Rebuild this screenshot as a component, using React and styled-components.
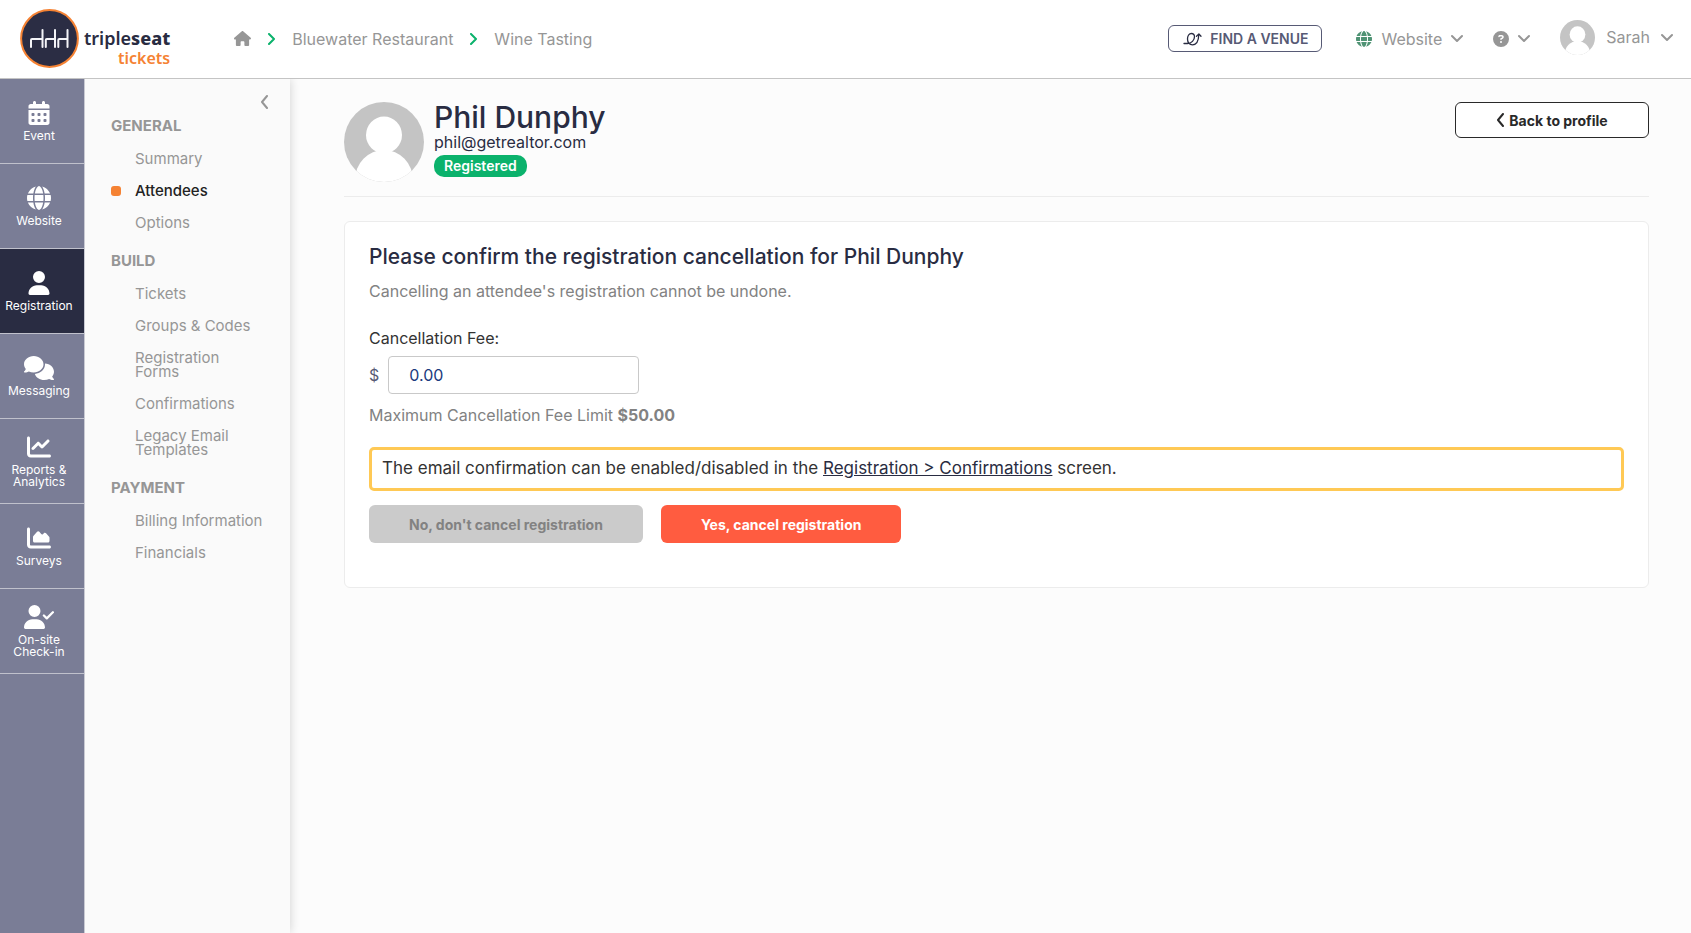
import React, { useState } from "react";
import styled, { createGlobalStyle, css } from "styled-components";
import {
  FaCalendarDays,
  FaGlobe,
  FaUser,
  FaComments,
  FaChartLine,
  FaChartArea,
  FaHouse,
  FaCircleQuestion,
} from "react-icons/fa6";

const GlobalStyle = createGlobalStyle`
  *,
  *::before,
  *::after {
    box-sizing: border-box;
  }

  body {
    margin: 0;
    background: #fcfcfc;
    color: #292c42;
    font-family: Inter, "Open Sans", sans-serif;
    font-size: 16px;
  }

  a {
    color: inherit;
    text-decoration: none;
  }

  button,
  input {
    font-family: inherit;
  }
`;

const Page = styled.div`
  min-height: 100vh;
  display: flex;
  flex-direction: column;
`;

const Header = styled.header`
  display: flex;
  align-items: center;
  height: 79px;
  padding: 0 18px 1px 20px;
  background: #fff;
  border-bottom: 1px solid #c4c4c4;
`;

const Logo = styled.a`
  display: flex;
  align-items: center;
  margin-right: 64px;
`;

const Wordmark = styled.span`
  display: flex;
  flex-direction: column;
  align-items: flex-end;
  margin-left: 5px;
  padding-top: 18px;
  font-family: "Noto Sans", sans-serif;
  font-size: 18px;
  font-weight: 600;
  line-height: 20px;

  b {
    font-weight: 800;
  }
`;

const Tickets = styled.span`
  color: #f58233;
  font-size: 16px;
`;

const Breadcrumbs = styled.nav`
  flex: 1;
  display: flex;
  align-items: center;
  gap: 16px;
  color: #969696;

  a {
    display: flex;
  }
`;

const Tools = styled.div`
  display: flex;
  align-items: center;
  color: #969696;
`;

const VenueButton = styled.button`
  display: flex;
  align-items: center;
  gap: 8px;
  height: 27px;
  margin-right: 34px;
  padding: 0 13px 0 14px;
  border: 1px solid #575a75;
  border-radius: 6px;
  background: #fff;
  color: #575a75;
  font-size: 14px;
  font-weight: 600;
`;

const ToolButton = styled.button`
  display: flex;
  align-items: center;
  gap: 9px;
  margin-right: ${(props) => props.$space || 0}px;
  padding: 0;
  border: 0;
  background: none;
  color: #969696;
  font-size: 16px;
`;

const UserButton = styled(ToolButton)`
  gap: 11px;
  padding-bottom: 3px;
`;

const Body = styled.div`
  flex: 1;
  display: flex;
`;

const Rail = styled.nav`
  flex: none;
  width: 85px;
  background: #7a7d96;
  border-right: 1px solid #c9cad3;
`;

const RailLink = styled.a`
  display: flex;
  flex-direction: column;
  align-items: center;
  justify-content: center;
  gap: 5px;
  height: 85px;
  padding-right: 6px;
  border-bottom: 1px solid #c0c1cc;
  background: ${(props) => (props.$active ? "#292c42" : "transparent")};
  color: #fff;
  font-size: 12px;
  line-height: 12px;
  text-align: center;

  svg {
    flex: none;
    height: 24px;
  }
`;

const SideNav = styled.nav`
  position: relative;
  z-index: 1;
  flex: none;
  width: 205px;
  padding: 39px 25px 40px 26px;
  background: #fafafa;
  box-shadow: 0 0 10px rgba(0, 0, 0, 0.18);
  clip-path: inset(0 -12px 0 0);
`;

const Collapse = styled.button`
  position: absolute;
  top: 16px;
  right: 21px;
  display: flex;
  padding: 0;
  border: 0;
  background: none;
  color: #969696;
`;

const GroupTitle = styled.h2`
  margin: 0 0 18px;
  color: #969696;
  font-size: 15px;
  font-weight: 700;
  line-height: 16px;
`;

const LinkList = styled.ul`
  display: flex;
  flex-direction: column;
  gap: 18px;
  margin: 0 0 23px;
  padding: 0;
  list-style: none;
`;

const SideLink = styled.a`
  display: flex;
  align-items: center;
  color: #969696;
  font-size: 15px;
  line-height: 14px;

  &::before {
    content: "";
    flex: none;
    width: 10px;
    height: 10px;
    margin-right: 14px;
    border-radius: 3px;
  }

  ${(props) =>
    props.$active &&
    css`
      color: #222;
      font-weight: 500;

      &::before {
        background: #f58233;
      }
    `}
`;

const Main = styled.main`
  flex: 1;
  min-width: 0;
  padding: 23px 42px 40px 54px;
`;

const Profile = styled.section`
  display: flex;
  align-items: flex-start;
  gap: 10px;
  padding-bottom: 14px;
  border-bottom: 1px solid #ececec;
`;

const ProfileText = styled.div`
  flex: 1;
`;

const Name = styled.h1`
  margin: 0;
  font-size: 30px;
  font-weight: 500;
  line-height: 30px;
`;

const Email = styled.p`
  margin: 0;
  font-size: 16px;
  line-height: 20px;
`;

const Badge = styled.span`
  display: inline-block;
  margin-top: 3px;
  padding: 0 10px;
  border-radius: 10px;
  background: #0bb26c;
  color: #fff;
  font-size: 14px;
  font-weight: 600;
  line-height: 22px;
`;

const BackButton = styled.button`
  display: flex;
  align-items: center;
  justify-content: center;
  gap: 5px;
  width: 194px;
  height: 36px;
  border: 1px solid #292929;
  border-radius: 6px;
  background: #fff;
  color: #292929;
  font-size: 14px;
  font-weight: 700;
`;

const Card = styled.form`
  margin-top: 24px;
  padding: 23px 24px 44px;
  border: 1px solid #ececec;
  border-radius: 6px;
  background: #fff;
`;

const CardTitle = styled.h2`
  margin: 0 0 12px;
  font-size: 21px;
  font-weight: 500;
  line-height: 24px;
`;

const Muted = styled.p`
  margin: 0;
  color: #828282;
  font-size: 16px;
  line-height: 20px;
`;

const Label = styled.label`
  display: block;
  margin: 27px 0 8px;
  color: #333;
  font-size: 16px;
  line-height: 20px;
`;

const MoneyField = styled.div`
  display: flex;
  align-items: center;
  gap: 9px;
  margin-bottom: 11px;
  color: #575a75;
`;

const MoneyInput = styled.input`
  width: 251px;
  height: 38px;
  padding: 0 20px;
  border: 1px solid #c9c9c9;
  border-radius: 4px;
  background: #fff;
  color: #1b3a7d;
  font-size: 16px;
`;

const Notice = styled.p`
  margin: 22px 0 14px;
  padding: 8px 10px 10px;
  border: 3px solid #ffc955;
  border-radius: 5px;
  color: #333;
  font-size: 17px;
  line-height: 20px;

  a {
    color: #292c42;
    text-decoration: underline;
  }
`;

const Actions = styled.div`
  display: flex;
  gap: 18px;
`;

const ActionButton = styled.button`
  height: 38px;
  padding: 0 40px;
  border: 0;
  border-radius: 6px;
  background: ${(props) => (props.$danger ? "#ff5c40" : "#cbcbcb")};
  color: ${(props) => (props.$danger ? "#fff" : "#828282")};
  font-size: 14px;
  font-weight: 700;
`;

const chevrons = {
  left: "M7 1 L2 7 L7 13",
  right: "M2 1 L7 6 L2 11",
  down: "M1 2 L6 7 L11 2",
};

const Chevron = ({ dir, width, height, color = "currentColor", weight = 2 }) => (
  <svg
    width={width}
    height={height}
    viewBox={`0 0 ${width} ${height}`}
    fill="none"
    aria-hidden="true"
  >
    <path
      d={chevrons[dir]}
      stroke={color}
      strokeWidth={weight}
      strokeLinecap="round"
      strokeLinejoin="round"
    />
  </svg>
);

const DownChevron = () => <Chevron dir="down" width={12} height={9} />;

const CrumbChevron = () => <Chevron dir="right" width={9} height={12} color="#0bb26c" />;

const Avatar = ({ size }) => (
  <svg width={size} height={size} viewBox="0 0 80 80" aria-hidden="true">
    <clipPath id={`avatar-${size}`}>
      <circle cx="40" cy="40" r="40" />
    </clipPath>
    <g clipPath={`url(#avatar-${size})`}>
      <rect width="80" height="80" fill="#c4c4c4" />
      <ellipse cx="40" cy="33" rx="18" ry="18.500" fill="#fff" />
      <ellipse cx="40" cy="78" rx="29" ry="30" fill="#fff" />
    </g>
  </svg>
);

const LogoMark = () => (
  <svg width="59" height="59" viewBox="0 0 59 59" aria-hidden="true">
    <circle cx="29.5" cy="29.5" r="28.4" fill="#2b2d44" stroke="#f58233" strokeWidth="2" />
    <g fill="none" stroke="#f4f4f8" strokeWidth="2" strokeLinecap="round">
      <path d="M11 38 V31 Q11 30 12 30 H22.500 M22.500 21 V38" />
      <path d="M25.800 38 V31 Q25.800 30 26.800 30 H35 M35 21 V38" />
      <path d="M38.300 38 V31 Q38.300 30 39.300 30 H47.500 M47.500 21 V38" />
    </g>
  </svg>
);

const VenueIcon = () => (
  <svg width="19" height="14" viewBox="0 0 19 14" fill="none" aria-hidden="true">
    <path
      d="M1 11.500 H4.500 C8.500 11.500 11.500 8 11.500 4.800 C11.500 2.600 10.200 1.500 8.500 1.500 C6 1.500 4.500 4 4.500 7 C4.500 10.500 6.500 12.800 9.500 12.800 C13.500 12.800 15.600 8.500 15.800 2.500 M13.500 4.300 L15.900 1.900 L18 4.300"
      stroke="#292c42"
      strokeWidth="1.300"
      strokeLinecap="round"
      strokeLinejoin="round"
    />
  </svg>
);

const UserCheckIcon = () => (
  <svg width="30" height="24" viewBox="0 0 640 512" fill="#fff" aria-hidden="true">
    <path d="M96 128a128 128 0 1 1 256 0A128 128 0 1 1 96 128zM0 482.300C0 383.800 79.800 304 178.300 304h91.400C368.200 304 448 383.800 448 482.300c0 16.400-13.300 29.700-29.700 29.700H29.700C13.300 512 0 498.700 0 482.300z" />
    <path
      d="M424 224 L486 286 L616 156"
      fill="none"
      stroke="#fff"
      strokeWidth="48"
      strokeLinecap="round"
      strokeLinejoin="round"
    />
  </svg>
);

const railItems = [
  { label: "Event", icon: <FaCalendarDays size={24} /> },
  { label: "Website", icon: <FaGlobe size={24} /> },
  { label: "Registration", icon: <FaUser size={24} />, active: true },
  { label: "Messaging", icon: <FaComments size={30} /> },
  { label: "Reports & Analytics", icon: <FaChartLine size={24} /> },
  { label: "Surveys", icon: <FaChartArea size={24} /> },
  { label: "On-site Check-in", icon: <UserCheckIcon /> },
];

const sideGroups = [
  { title: "GENERAL", links: ["Summary", "Attendees", "Options"] },
  {
    title: "BUILD",
    links: [
      "Tickets",
      "Groups & Codes",
      "Registration Forms",
      "Confirmations",
      "Legacy Email Templates",
    ],
  },
  { title: "PAYMENT", links: ["Billing Information", "Financials"] },
];

const App = () => {
  const [fee, setFee] = useState("0.00");

  return (
    <Page>
      <GlobalStyle />
      <Header>
        <Logo href="#" aria-label="Tripleseat Tickets">
          <LogoMark />
          <Wordmark>
            <span>
              triple<b>seat</b>
            </span>
            <Tickets>tickets</Tickets>
          </Wordmark>
        </Logo>
        <Breadcrumbs aria-label="Breadcrumb">
          <a href="#" aria-label="Home">
            <FaHouse size={17} />
          </a>
          <CrumbChevron />
          <a href="#">Bluewater Restaurant</a>
          <CrumbChevron />
          <a href="#">Wine Tasting</a>
        </Breadcrumbs>
        <Tools>
          <VenueButton type="button">
            <VenueIcon />
            FIND A VENUE
          </VenueButton>
          <ToolButton type="button" $space={30}>
            <FaGlobe size={16} color="#4f9374" />
            Website
            <DownChevron />
          </ToolButton>
          <ToolButton type="button" $space={30} aria-label="Help">
            <FaCircleQuestion size={16} />
            <DownChevron />
          </ToolButton>
          <UserButton type="button">
            <Avatar size={35} />
            Sarah
            <DownChevron />
          </UserButton>
        </Tools>
      </Header>
      <Body>
        <Rail aria-label="Sections">
          {railItems.map((item) => (
            <RailLink key={item.label} href="#" $active={item.active}>
              {item.icon}
              {item.label}
            </RailLink>
          ))}
        </Rail>
        <SideNav aria-label="Registration">
          <Collapse type="button" aria-label="Collapse menu">
            <Chevron dir="left" width={9} height={14} />
          </Collapse>
          {sideGroups.map((group) => (
            <React.Fragment key={group.title}>
              <GroupTitle>{group.title}</GroupTitle>
              <LinkList>
                {group.links.map((link) => (
                  <li key={link}>
                    <SideLink href="#" $active={link === "Attendees"}>
                      {link}
                    </SideLink>
                  </li>
                ))}
              </LinkList>
            </React.Fragment>
          ))}
        </SideNav>
        <Main>
          <Profile>
            <Avatar size={80} />
            <ProfileText>
              <Name>Phil Dunphy</Name>
              <Email>phil@getrealtor.com</Email>
              <Badge>Registered</Badge>
            </ProfileText>
            <BackButton type="button">
              <Chevron dir="left" width={8} height={14} />
              Back to profile
            </BackButton>
          </Profile>
          <Card onSubmit={(e) => e.preventDefault()}>
            <CardTitle>
              Please confirm the registration cancellation for Phil Dunphy
            </CardTitle>
            <Muted>Cancelling an attendee's registration cannot be undone.</Muted>
            <Label htmlFor="fee">Cancellation Fee:</Label>
            <MoneyField>
              $
              <MoneyInput
                id="fee"
                type="text"
                value={fee}
                onChange={(e) => setFee(e.target.value)}
              />
            </MoneyField>
            <Muted>
              Maximum Cancellation Fee Limit <b>$50.00</b>
            </Muted>
            <Notice>
              The email confirmation can be enabled/disabled in the{" "}
              <a href="#">Registration &gt; Confirmations</a> screen.
            </Notice>
            <Actions>
              <ActionButton type="button">No, don't cancel registration</ActionButton>
              <ActionButton type="submit" $danger>
                Yes, cancel registration
              </ActionButton>
            </Actions>
          </Card>
        </Main>
      </Body>
    </Page>
  );
};

export default App;
